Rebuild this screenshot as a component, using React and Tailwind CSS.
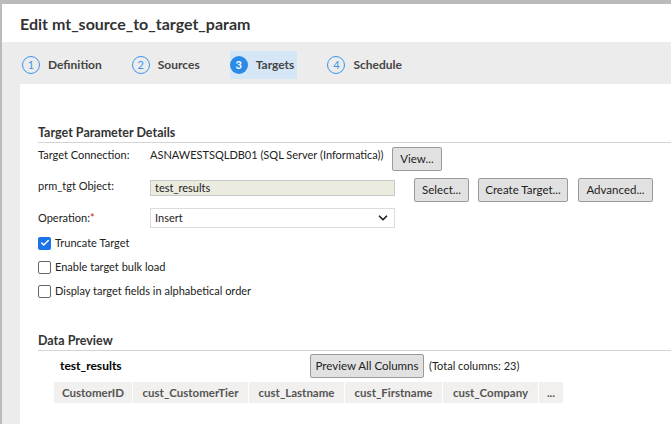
import { Check, ChevronDown } from "lucide-react";

const font = { fontFamily: "Lato, 'Open Sans', sans-serif" };

const tabs = [
  { n: 1, label: "Definition" },
  { n: 2, label: "Sources" },
  { n: 3, label: "Targets", active: true },
  { n: 4, label: "Schedule" },
];

const columns = [
  { name: "CustomerID", w: "w-[78px]" },
  { name: "cust_CustomerTier", w: "w-[115px]" },
  { name: "cust_Lastname", w: "w-[95px]" },
  { name: "cust_Firstname", w: "w-[97px]" },
  { name: "cust_Company", w: "w-[95px]" },
  { name: "...", w: "w-[24px]" },
];

function Btn({ children, className = "" }) {
  return (
    <button
      className={`h-[24px] px-0 border border-[#9a9a9a] rounded-[2px] bg-[#e1e1e1] text-[11.5px] text-[#222] whitespace-nowrap ${className}`}
    >
      {children}
    </button>
  );
}

function CheckRow({ checked, label }) {
  return (
    <div className="flex items-center gap-[4px] h-[24px]">
      {checked ? (
        <span className="w-[13px] h-[13px] rounded-[2px] bg-[#1a73e8] flex items-center justify-center">
          <Check size={10} strokeWidth={3.5} className="text-white" />
        </span>
      ) : (
        <span className="w-[13px] h-[13px] rounded-[2px] border border-[#666] bg-white" />
      )}
      <span className="text-[11px] text-[#222]">{label}</span>
    </div>
  );
}

export default function App() {
  return (
    <div className="w-[671px] h-[424px] bg-[#bbbbbb] pt-[4px] pl-[2px] overflow-hidden" style={font}>
      <div className="h-full bg-white flex flex-col">
        {/* HEADER */}
        <div className="h-[38px] flex items-center pl-[18px] pt-[1px]">
          <h1 className="text-[16px] font-bold text-[#333]">Edit mt_source_to_target_param</h1>
        </div>

        <div className="flex-1 bg-[#ececec] flex flex-col">
          {/* STEPS */}
          <div className="h-[42px] flex items-center pl-[20px] pt-[4px]">
            {tabs.map((t) => (
              <div
                key={t.n}
                className={`flex items-center gap-[8px] h-[28px] mr-[30px] ${
                  t.active ? "bg-[#d5e7f7] pr-[3px]" : ""
                }`}
              >
                <span
                  className={`w-[18px] h-[18px] rounded-full flex items-center justify-center text-[11px] ${
                    t.active
                      ? "bg-[#2b8be8] text-white font-bold"
                      : "border border-[#3d95ee] text-[#3d95ee]"
                  }`}
                >
                  {t.n}
                </span>
                <span className="text-[12px] font-bold text-[#444]">{t.label}</span>
              </div>
            ))}
          </div>

          {/* CONTENT */}
          <div className="flex-1 ml-[18px] bg-white pl-[18px] pt-[42px]">
            <div className="text-[12.5px] leading-[14px] font-bold text-[#333] pb-[2px] border-b border-[#d4d4d4]">
              Target Parameter Details
            </div>

            <div className="flex items-start h-[24px] mt-[4px]">
              <span className="w-[112px] text-[11px] text-[#222]">Target Connection:</span>
              <span className="w-[242px] text-[11px] text-[#222] whitespace-nowrap">
                ASNAWESTSQLDB01 (SQL Server (Informatica))
              </span>
              <Btn className="w-[50px]">View...</Btn>
            </div>

            <div className="flex items-start h-[24px] mt-[7px]">
              <span className="w-[112px] text-[11px] text-[#222]">prm_tgt Object:</span>
              <div className="mt-[2px] w-[245px] h-[16px] bg-[#ecebe0] border border-[#c9c9c9] text-[11px] leading-[14px] pl-[4px] text-[#222]">
                test_results
              </div>
              <Btn className="ml-[19px] w-[55px]">Select...</Btn>
              <Btn className="ml-[9px] w-[90px]">Create Target...</Btn>
              <Btn className="ml-[10px] w-[75px]">Advanced...</Btn>
            </div>

            <div className="flex items-center h-[20px] mt-[6px]">
              <span className="w-[112px] text-[11px] text-[#222]">
                Operation:<span className="text-[#d0201a]">*</span>
              </span>
              <div className="w-[245px] h-[20px] border border-[#dcdcdc] flex items-center justify-between pl-[4px] pr-[4px]">
                <span className="text-[11px] text-[#222]">Insert</span>
                <ChevronDown size={14} strokeWidth={3} className="text-[#222]" />
              </div>
            </div>

            <div className="flex flex-col mt-[3px]">
              <CheckRow checked label="Truncate Target" />
              <CheckRow label="Enable target bulk load" />
              <CheckRow label="Display target fields in alphabetical order" />
            </div>

            {/* DATA PREVIEW */}
            <div className="mt-[31px] text-[12.5px] leading-[14px] font-bold text-[#333] pb-[2px] border-b border-[#d4d4d4]">
              Data Preview
            </div>
            <div className="flex items-center h-[24px] mt-[3px] pl-[22px]">
              <span className="w-[250px] text-[12px] font-bold text-black">test_results</span>
              <Btn className="w-[114px]">Preview All Columns</Btn>
              <span className="ml-[5px] text-[11px] text-[#222]">(Total columns: 23)</span>
            </div>
            <div className="flex gap-[1px] pl-[16px] mt-[4px]">
              {columns.map((c) => (
                <div
                  key={c.name}
                  className={`${c.w} h-[21px] bg-[#f1f0ee] flex items-center justify-center text-[11.5px] font-bold text-[#555]`}
                >
                  {c.name}
                </div>
              ))}
            </div>
          </div>
        </div>
      </div>
    </div>
  );
}
